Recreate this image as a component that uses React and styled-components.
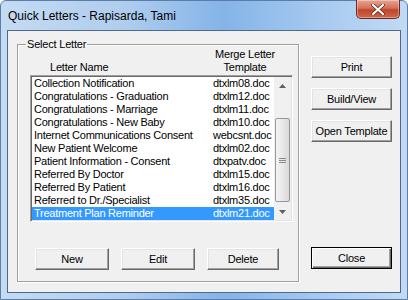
import React from 'react'
import styled, { createGlobalStyle } from 'styled-components'

const GlobalStyle = createGlobalStyle`
  html, body { margin: 0; padding: 0; background: #fff; }
  body { font-family: "Liberation Sans", Arial, sans-serif; }
`

const letters = [
  ['Collection Notification', 'dtxlm08.doc'],
  ['Congratulations - Graduation', 'dtxlm12.doc'],
  ['Congratulations - Marriage', 'dtxlm11.doc'],
  ['Congratulations - New Baby', 'dtxlm10.doc'],
  ['Internet Communications Consent', 'webcsnt.doc'],
  ['New Patient Welcome', 'dtxlm02.doc'],
  ['Patient Information - Consent', 'dtxpatv.doc'],
  ['Referred By Doctor', 'dtxlm15.doc'],
  ['Referred By Patient', 'dtxlm16.doc'],
  ['Referred to Dr./Specialist', 'dtxlm35.doc'],
  ['Treatment Plan Reminder', 'dtxlm21.doc'],
]

const Window = styled.div`
  width: 408px;
  height: 300px;
  box-sizing: border-box;
  display: flex;
  flex-direction: column;
  border: 1px solid #5a7ea8;
  border-radius: 6px 6px 0 0;
  background: linear-gradient(90deg, #c4dbf2 0%, #b0cdee 30%, #84b4e8 55%, #a9cbf0 80%, #c2daf4 100%);
`

const TitleBar = styled.div`
  height: 29px;
  display: flex;
  align-items: flex-start;
  justify-content: space-between;
  padding-left: 7px;
`

const Title = styled.div`
  font-size: 12px;
  line-height: 12px;
  margin-top: 9px;
  color: #000;
`

const CloseBox = styled.div`
  width: 44px;
  height: 19px;
  margin-right: 7px;
  margin-top: -1px;
  box-sizing: border-box;
  border: 1px solid #6b2b22;
  border-top: none;
  border-radius: 0 0 5px 5px;
  background: linear-gradient(180deg, #e8a493 0%, #d6705a 45%, #c0442c 55%, #d06a4c 100%);
  display: flex;
  align-items: center;
  justify-content: center;
  box-shadow: inset 0 0 0 1px rgba(255, 255, 255, 0.35);
`

const Client = styled.div`
  flex: 1;
  margin: 0 6px 6px 6px;
  border: 1px solid #4d6a8c;
  background: #f0f0f0;
  display: flex;
  padding: 7px 7px 10px 9px;
  gap: 12px;
`

const Group = styled.fieldset`
  margin: 0;
  width: 282px;
  box-sizing: border-box;
  border: 1px solid #a0a0a0;
  box-shadow: 1px 1px 0 #fff, inset 1px 1px 0 #fff;
  padding: 0 0 0 12px;
  display: flex;
  flex-direction: column;
`

const Legend = styled.legend`
  font-size: 11px;
  letter-spacing: -0.2px;
  padding: 0 1px;
  margin-left: -4px;
  color: #000;
`

const Headers = styled.div`
  display: flex;
  align-items: flex-end;
  height: 24px;
  font-size: 11px;
  line-height: 13px;
  letter-spacing: -0.2px;
  color: #000;
`

const NameHead = styled.div`
  width: 20px;
  padding-left: 20px;
  white-space: nowrap;
`

const TemplateHead = styled.div`
  margin-left: 143px;
  width: 64px;
  text-align: center;
`

const ListBox = styled.div`
  margin-top: 1px;
  width: 263px;
  height: 147px;
  box-sizing: border-box;
  border: 1px solid;
  border-color: #a0a0a0 #fff #fff #a0a0a0;
  box-shadow: inset 1px 1px 0 #696969, inset -1px -1px 0 #e3e3e3;
  background: #fff;
  display: flex;
  padding: 1px;
`

const Rows = styled.div`
  flex: 1;
  display: flex;
  flex-direction: column;
`

const Row = styled.div`
  height: 13px;
  display: flex;
  font-size: 11px;
  line-height: 13px;
  letter-spacing: -0.25px;
  background: ${p => (p.$selected ? '#3399ff' : 'transparent')};
  color: ${p => (p.$selected ? '#fff' : '#000')};
  white-space: nowrap;
`

const NameCell = styled.div`
  width: 179px;
  padding-left: 2px;
`

const FileCell = styled.div``

const ScrollBar = styled.div`
  width: 17px;
  background: #f0f0f0;
  display: flex;
  flex-direction: column;
  align-items: stretch;
`

const Arrow = styled.div`
  height: 17px;
  display: flex;
  align-items: center;
  justify-content: center;
`

const Track = styled.div`
  flex: 1;
  display: flex;
  flex-direction: column;
  justify-content: flex-end;
  padding: 0 1px;
`

const Thumb = styled.div`
  height: 84px;
  margin-bottom: 1px;
  box-sizing: border-box;
  border: 1px solid #979797;
  border-radius: 2px;
  background: linear-gradient(90deg, #f4f4f4 0%, #e8e8e8 50%, #d8d8d8 100%);
  display: flex;
  align-items: center;
  justify-content: center;
`

const BottomBar = styled.div`
  display: flex;
  gap: 12px;
  margin-top: 26px;
  margin-left: 5px;
`

const Side = styled.div`
  display: flex;
  flex-direction: column;
  gap: 10px;
  padding-top: 18px;
`

const Button = styled.div`
  width: ${p => p.$w || 81}px;
  height: 22px;
  box-sizing: border-box;
  font-size: 11px;
  letter-spacing: -0.2px;
  display: flex;
  align-items: center;
  justify-content: center;
  color: #000;
  background: #f0f0f0;
  border: 1px solid;
  border-color: ${p => (p.$default ? '#000' : '#fff #696969 #696969 #fff')};
  box-shadow: ${p =>
    p.$default
      ? 'inset 1px 1px 0 #fff, inset -1px -1px 0 #696969, inset -2px -2px 0 #a0a0a0'
      : 'inset -1px -1px 0 #a0a0a0, inset 1px 1px 0 #e3e3e3'};
`

const CloseSlot = styled.div`
  margin-top: auto;
  margin-bottom: 13px;
`

export default function App() {
  return (
    <>
      <GlobalStyle />
      <Window>
        <TitleBar>
          <Title>Quick Letters - Rapisarda, Tami</Title>
          <CloseBox>
            <svg width="14" height="11" viewBox="0 0 14 11">
              <path d="M2 1 L12 10 M12 1 L2 10" stroke="#5a2a20" strokeWidth="3.6" strokeLinecap="round" />
              <path d="M2 1 L12 10 M12 1 L2 10" stroke="#fff" strokeWidth="2.2" strokeLinecap="round" />
            </svg>
          </CloseBox>
        </TitleBar>
        <Client>
          <Group>
            <Legend>Select Letter</Legend>
            <Headers>
              <NameHead>Letter Name</NameHead>
              <TemplateHead>Merge Letter Template</TemplateHead>
            </Headers>
            <ListBox>
              <Rows>
                {letters.map(([name, file], i) => (
                  <Row key={name} $selected={i === letters.length - 1}>
                    <NameCell>{name}</NameCell>
                    <FileCell>{file}</FileCell>
                  </Row>
                ))}
              </Rows>
              <ScrollBar>
                <Arrow>
                  <svg width="7" height="4" viewBox="0 0 7 4"><path d="M0 4 L3.5 0 L7 4 Z" fill="#606060" /></svg>
                </Arrow>
                <Track>
                  <Thumb>
                    <svg width="7" height="7" viewBox="0 0 7 7">
                      <path d="M0 1.5 H7 M0 3.5 H7 M0 5.5 H7" stroke="#8a8a8a" strokeWidth="1" />
                    </svg>
                  </Thumb>
                </Track>
                <Arrow>
                  <svg width="7" height="4" viewBox="0 0 7 4"><path d="M0 0 L7 0 L3.5 4 Z" fill="#606060" /></svg>
                </Arrow>
              </ScrollBar>
            </ListBox>
            <BottomBar>
              <Button $w={74}>New</Button>
              <Button $w={74}>Edit</Button>
              <Button $w={72}>Delete</Button>
            </BottomBar>
          </Group>
          <Side>
            <Button>Print</Button>
            <Button>Build/View</Button>
            <Button>Open Template</Button>
            <CloseSlot>
              <Button $default>Close</Button>
            </CloseSlot>
          </Side>
        </Client>
      </Window>
    </>
  )
}
